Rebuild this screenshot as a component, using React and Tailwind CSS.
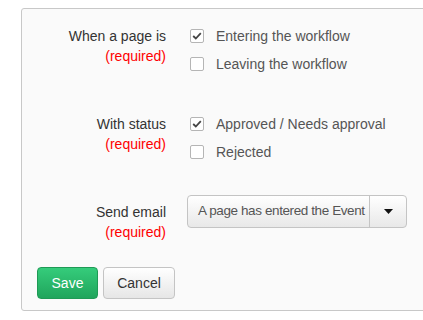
import React from "react";

function Box({ checked }) {
  return (
    <span className="flex h-[14px] w-[14px] shrink-0 items-center justify-center rounded-[2px] border border-[#b5b5b5] bg-white">
      {checked && (
        <svg width="10" height="8" viewBox="0 0 10 8">
          <polyline points="1.2,4 3.8,6.5 8.8,1.2" fill="none" stroke="#444" strokeWidth="1.8" />
        </svg>
      )}
    </span>
  );
}

function Option({ checked, children }) {
  return (
    <div className="flex h-5 items-center gap-3 text-[14px] leading-5 text-[#555]">
      <Box checked={checked} />
      <span>{children}</span>
    </div>
  );
}

function Label({ title, className = "" }) {
  return (
    <div className={`w-[144px] shrink-0 text-right text-[14px] leading-5 ${className}`}>
      <div className="text-[#333]">{title}</div>
      <div className="text-[#f00]">(required)</div>
    </div>
  );
}

export default function App() {
  return (
    <div className="min-h-[320px] bg-white pt-[8px] pl-[21px]" style={{ fontFamily: '"Liberation Sans", Arial, sans-serif' }}>
      <div className="w-[420px] rounded-[3px] border border-[#c8c8c8] bg-[#fafafa] pt-[17px] pb-[11px]">
        <div className="flex items-start">
          <Label title="When a page is" />
          <div className="ml-6 flex flex-col gap-2">
            <Option checked>Entering the workflow</Option>
            <Option>Leaving the workflow</Option>
          </div>
        </div>
        <div className="mt-10 flex items-start">
          <Label title="With status" />
          <div className="ml-6 flex flex-col gap-2">
            <Option checked>Approved / Needs approval</Option>
            <Option>Rejected</Option>
          </div>
        </div>
        <div className="mt-[33px] flex items-start">
          <Label title="Send email" className="pt-[7px]" />
          <div className="ml-[21px] flex h-[33px] w-[220px] overflow-hidden rounded-[4px] border border-[#c4c4c4] bg-gradient-to-b from-white to-[#e8e8e8]">
            <div className="flex min-w-0 flex-1 items-center overflow-hidden whitespace-nowrap pl-[10px] text-[13.5px] tracking-[-0.4px] text-[#555]">
              A page has entered the Event
            </div>
            <div className="flex w-[37px] shrink-0 items-center justify-center border-l border-[#c4c4c4]">
              <svg width="9" height="5" viewBox="0 0 9 5">
                <polygon points="0,0 9,0 4.5,5" fill="#111" />
              </svg>
            </div>
          </div>
        </div>
        <div className="mt-[25px] ml-[15px] flex gap-[5px]">
          <button className="h-8 w-[61px] rounded-[4px] border border-[#1f9a55] bg-gradient-to-b from-[#35cc7b] to-[#20a55c] text-[14px] text-white">
            Save
          </button>
          <button className="h-8 w-[72px] rounded-[4px] border border-[#c4c4c4] bg-gradient-to-b from-white to-[#e6e6e6] text-[14px] text-[#333]">
            Cancel
          </button>
        </div>
      </div>
    </div>
  );
}
